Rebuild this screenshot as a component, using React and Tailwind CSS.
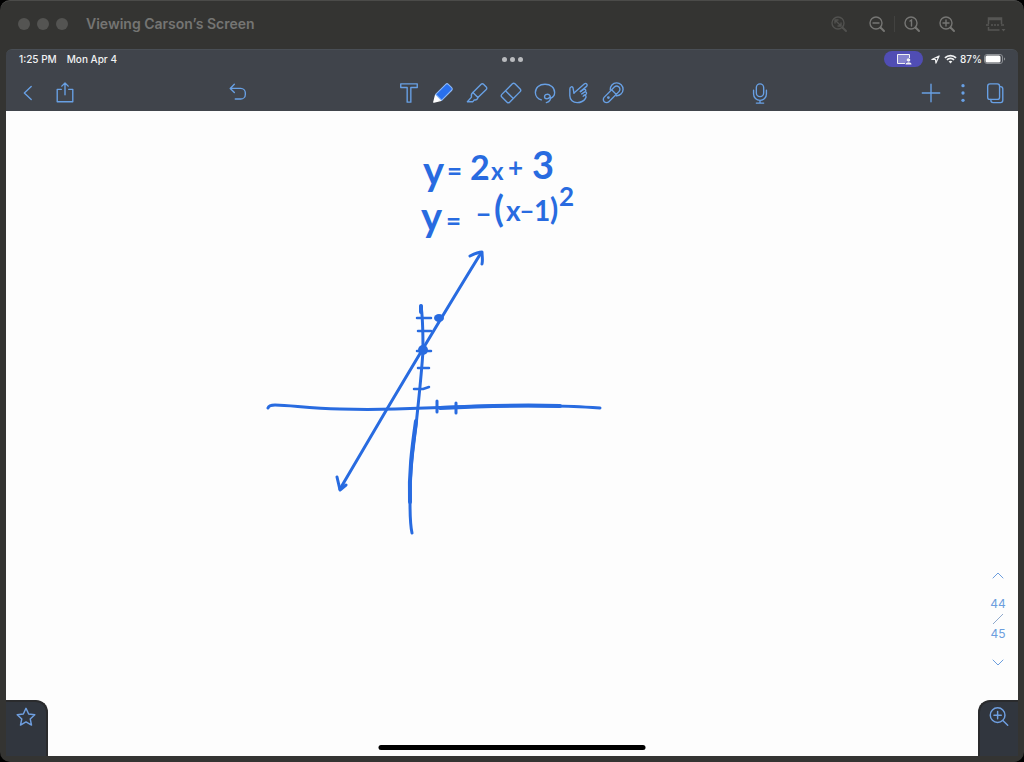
import React, { useState } from "react";

const tools = [
  { id: "text", label: "Text", icon: TextIcon },
  { id: "pen", label: "Pen", icon: PenIcon },
  { id: "highlighter", label: "Highlighter", icon: HighlighterIcon },
  { id: "eraser", label: "Eraser", icon: EraserIcon },
  { id: "lasso", label: "Lasso", icon: LassoIcon },
  { id: "hand", label: "Read only", icon: HandIcon },
  { id: "laser", label: "Laser pointer", icon: LaserIcon },
];

export default function App() {
  const [tool, setTool] = useState("pen");

  return (
    <div className="min-h-screen bg-black font-['Inter',sans-serif]">
      <div className="flex min-h-screen flex-col rounded-[10px] border-t border-[#4b4b49] bg-[#343432] px-1.5 pb-1.5">
        <TitleBar />

        <header className="rounded-t-md border-t border-[#494e55] bg-[#40444b]">
          <StatusBar />
          <div className="grid h-[43px] grid-cols-[1fr_auto_1fr] items-center pt-1.5 text-[#68a0e4]">
            <div className="flex items-center gap-[5px] pl-1.5">
              <ToolButton label="Back">
                <Icon><path d="M15.5 5L8 12l7.5 7" /></Icon>
              </ToolButton>
              <ToolButton label="Share">
                <Icon>
                  <path d="M8 8H3.5v13.500h17V8H16M12 14V1M8.500 4.500L12 1l3.500 3.500" />
                </Icon>
              </ToolButton>
              <div className="ml-34">
                <ToolButton label="Undo">
                  <Icon><path d="M8 2.500L3.500 7 8 11.500M3.500 7H15a5 5 0 0 1 5 5v1.500a5 5 0 0 1-5 5H9" /></Icon>
                </ToolButton>
              </div>
            </div>

            <div className="flex pr-0.5">
              {tools.map(t => (
                <button
                  key={t.id}
                  aria-label={t.label}
                  aria-pressed={tool === t.id}
                  onClick={() => setTool(t.id)}
                  className="flex h-8 w-[34px] items-center justify-center"
                >
                  <t.icon />
                </button>
              ))}
            </div>

            <div className="flex items-center pr-[7px] pl-28">
              <ToolButton label="Record">
                <Icon>
                  <rect x="8" y="2" width="8" height="14" rx="4" />
                  <path d="M5 9v4a7 7 0 0 0 14 0V9M12 20v3M8 23h8" />
                </Icon>
              </ToolButton>
              <div className="ml-auto flex">
                <ToolButton label="Add">
                  <Icon><path d="M12 2.500v19M2.500 12h19" /></Icon>
                </ToolButton>
                <ToolButton label="More">
                  <Icon>
                    <g fill="currentColor" stroke="none">
                      <circle cx="12" cy="4" r="1.800" />
                      <circle cx="12" cy="12" r="1.800" />
                      <circle cx="12" cy="20" r="1.800" />
                    </g>
                  </Icon>
                </ToolButton>
                <ToolButton label="Pages">
                  <Icon>
                    <rect x="4" y="2" width="13" height="17" rx="2.500" />
                    <path d="M17 5h1a2.500 2.500 0 0 1 2.500 2.500V20a2.500 2.500 0 0 1-2.500 2.500h-8A2.500 2.500 0 0 1 7.500 20v-1" />
                  </Icon>
                </ToolButton>
              </div>
            </div>
          </div>
        </header>

        <main className="relative flex-1 bg-[#fdfdfd]">
          <Note />
          <Pager page={44} total={45} />
          <button
            aria-label="Favorites"
            className="absolute bottom-0 left-0 flex h-14 w-[42px] justify-center rounded-tr-xl border-t-2 border-r-2 border-[#2a2b2d] bg-[#31363e] pt-1 text-[#6f9fe0]"
          >
            <svg viewBox="0 0 24 24" className="size-[22px]" fill="none" stroke="currentColor" strokeWidth="1.600" strokeLinejoin="round">
              <path d="M12 2.500l2.900 6.200 6.700.8-5 4.600 1.400 6.700-6-3.400-6 3.400 1.400-6.700-5-4.600 6.700-.8z" />
            </svg>
          </button>
          <button
            aria-label="Zoom"
            className="absolute right-0 bottom-0 flex h-14 w-10 justify-center rounded-tl-xl border-t-2 border-l-2 border-[#2a2b2d] bg-[#31363e] pt-1 text-[#6f9fe0]"
          >
            <svg viewBox="0 0 24 24" className="size-[22px]" fill="none" stroke="currentColor" strokeWidth="1.600" strokeLinecap="round">
              <circle cx="10.500" cy="10" r="8" />
              <path d="M16.500 16l5 5M10.500 6v8M6.500 10h8" />
            </svg>
          </button>
          <div className="absolute bottom-1.5 left-1/2 h-[5px] w-[267px] -translate-x-1/2 rounded-full bg-black" />
        </main>
      </div>
    </div>
  );
}

function TitleBar() {
  return (
    <div className="flex h-12 items-center px-3 pb-0.5 text-[#60605e]">
      <div className="flex gap-[7px]">
        <span className="size-3 rounded-full bg-[#545452]" />
        <span className="size-3 rounded-full bg-[#545452]" />
        <span className="size-3 rounded-full bg-[#545452]" />
      </div>
      <h1 className="ml-[18px] text-sm font-semibold text-[#757573]">Viewing Carson’s Screen</h1>
      <div className="ml-auto flex items-center">
        <MagnifierButton label="Zoom to fit" className="mr-5 text-[#51514f]">
          <path d="M5 8V5h3M5 5l6 6M11 8v3H8" />
        </MagnifierButton>
        <MagnifierButton label="Zoom out" className="text-[#767674]">
          <path d="M5 8h6" />
        </MagnifierButton>
        <span className="mx-2 h-4 w-px bg-[#424240]" />
        <MagnifierButton label="Actual size" className="mr-[17px] text-[#767674]">
          <path d="M7 6l1.500-1V11" />
        </MagnifierButton>
        <MagnifierButton label="Zoom in" className="mr-[30px] text-[#767674]">
          <path d="M5 8h6M8 5v6" />
        </MagnifierButton>
        <button aria-label="Window options" className="text-[#565654]">
          <svg viewBox="0 0 20 18" className="h-[18px] w-5" fill="none" stroke="currentColor" strokeWidth="1.500">
            <path d="M2.500 9V3h13v6M2.500 4.500h13M0 10h3M15 10h3M2.500 12v3h11" />
            <path d="M5 10h8" strokeDasharray="2 1" />
            <path d="M15.500 14h4l-2 2.500z" fill="currentColor" stroke="none" />
          </svg>
        </button>
      </div>
    </div>
  );
}

function MagnifierButton({ label, className, children }) {
  return (
    <button aria-label={label} className={className}>
      <svg viewBox="0 0 18 18" className="size-[18px]" fill="none" stroke="currentColor" strokeWidth="1.400" strokeLinecap="round">
        <circle cx="8" cy="8" r="6" />
        <path d="M12.500 12.500L16 16" strokeWidth="2" />
        {children}
      </svg>
    </button>
  );
}

function StatusBar() {
  return (
    <div className="grid h-[18px] grid-cols-3 items-center pr-3 pl-[13px] text-[11px] font-medium text-[#f1f2f3]">
      <div className="flex gap-2.5 text-[10px]">
        <span>1:25 PM</span>
        <span>Mon Apr 4</span>
      </div>
      <div className="flex justify-center gap-[3px]">
        <span className="size-[5px] rounded-full bg-[#b9bbbe]" />
        <span className="size-[5px] rounded-full bg-[#b9bbbe]" />
        <span className="size-[5px] rounded-full bg-[#b9bbbe]" />
      </div>
      <div className="flex items-center justify-end">
        <span className="mr-2 flex h-4 w-[39px] items-center justify-center rounded-full bg-[#504db4]">
          <svg viewBox="0 0 16 12" className="h-3 w-4" fill="none" stroke="currentColor">
            <path d="M9 10.500H1.500v-9h12V5" fill="#8684cf" />
            <circle cx="12.500" cy="7" r="1.800" fill="currentColor" stroke="none" />
            <path d="M9.500 11.500c0-3 6-3 6 0z" fill="currentColor" stroke="none" />
          </svg>
        </span>
        <svg viewBox="0 0 10 10" className="mr-1 size-[9px]" fill="none" stroke="currentColor" strokeWidth="1.300" strokeLinejoin="round">
          <path d="M1 5L9 1 5.500 9 5 5z" />
        </svg>
        <svg viewBox="0 0 14 10" className="mr-[3px] h-[10px] w-[13px]" fill="none" stroke="currentColor" strokeWidth="1.800">
          <path d="M1 3.800a8.500 8.500 0 0 1 12 0M3.200 6a5.300 5.300 0 0 1 7.600 0" />
          <path d="M5 7.800a3 3 0 0 1 4 0l-2 2z" fill="currentColor" stroke="none" />
        </svg>
        <span className="text-[10px]">87%</span>
        <svg viewBox="0 0 22 10" className="ml-0.5 h-[10px] w-[22px]" fill="none">
          <rect x=".5" y=".5" width="18" height="9" rx="2.500" stroke="#8d9095" />
          <rect x="1.500" y="1.500" width="15" height="7" rx="1.500" fill="#fff" />
          <path d="M20 3.500c1.500.5 1.500 2.500 0 3z" fill="#8d9095" />
        </svg>
      </div>
    </div>
  );
}

function ToolButton({ label, children }) {
  return (
    <button aria-label={label} className="flex size-8 items-center justify-center">
      {children}
    </button>
  );
}

function Icon({ children }) {
  return (
    <svg viewBox="0 0 24 24" className="size-[22px]" fill="none" stroke="currentColor" strokeWidth="1.500" strokeLinecap="round" strokeLinejoin="round">
      {children}
    </svg>
  );
}

function TextIcon() {
  return (
    <Icon><path d="M3 2h18v4h-7v16h-4V6H3z" /></Icon>
  );
}

function PenIcon() {
  return (
    <Icon>
      <path d="M2 22l2-8 6 6z" fill="#fff" stroke="#fff" />
      <path d="M4 13.500L15 2.500a2 2 0 0 1 2.800 0l3.700 3.700a2 2 0 0 1 0 2.800L10.500 20z" fill="#2970ee" stroke="#8db8f5" strokeWidth="1.200" />
    </Icon>
  );
}

function HighlighterIcon() {
  return (
    <Icon>
      <path d="M7.500 11.500L16.500 2.500a1.800 1.800 0 0 1 2.600 0l3 3a1.800 1.800 0 0 1 0 2.600L13 17z" />
      <path d="M7.500 11.500c-2 1.500-2 3-1.500 5L1.500 21.500h6l1.500-2c2 .3 3.500-.8 4-2.500" />
    </Icon>
  );
}

function EraserIcon() {
  return (
    <Icon>
      <path d="M2 13.500L13.500 2a2 2 0 0 1 2.800 0L22 7.700a2 2 0 0 1 0 2.800L10.500 22a2 2 0 0 1-2.800 0L2 16.300a2 2 0 0 1 0-2.800zM6 9.500l8.500 8.500" />
    </Icon>
  );
}

function LassoIcon() {
  return (
    <Icon>
      <path d="M8 19.500C4 18.500 1.500 15 1.500 11.500 1.500 6 6 2.500 12 2.500S22.500 6 22.500 11.500c0 3-1.500 5-4 6" />
      <path d="M13.500 22.500c4-1 5.500-4.500 4-7.500-1.500-2.500-6-2-6 1 0 3 4.500 3 5.500.5" />
    </Icon>
  );
}

function HandIcon() {
  return (
    <Icon>
      <path d="M6.500 12L5.500 6.500C5 4.500 2 5 2 7.500V15c0 4.500 3.500 7.500 8 7.500 4 0 7-1.500 9-4.500 1.500-2 .5-4-1.500-3.500" />
      <path d="M6.500 12L18 2c1.800-1.300 3.800.7 2.500 2.500L13.500 10.500" />
      <path d="M13.500 10.500l3.500-2.300c1.800-1 3.200 1 1.800 2.300L15 13M18 11c1.800-.8 3 1 1.700 2.300L16.500 15.500" />
    </Icon>
  );
}

function LaserIcon() {
  return (
    <Icon>
      <path d="M9 8.500a7 7 0 1 1 6.500 6.500" />
      <path d="M18.500 10.500L7.500 21.500a3.500 3.500 0 0 1-5-5L13.500 5.500a3.500 3.500 0 0 1 5 5zM10.500 8.500l5 5" />
      <circle cx="7" cy="17" r=".8" />
    </Icon>
  );
}

// Handwritten page content: the two equations and the sketched graph
function Note() {
  return (
    <svg
      viewBox="6 111 1012 645"
      className="block w-full"
      fill="none"
      stroke="#286be0"
      strokeWidth="3"
      strokeLinecap="round"
      strokeLinejoin="round"
    >
      <g fill="#286be0" stroke="none" className="font-['Lato',sans-serif] text-[32px] font-bold">
        <text y="180">
          <tspan x="423" y="185" fontSize="40">y</tspan>
          <tspan x="447" y="180" fontSize="26">=</tspan>
          <tspan x="470" fontSize="34">2</tspan>
          <tspan x="491" fontSize="24">x</tspan>
          <tspan x="508" y="177" fontSize="26">+</tspan>
          <tspan x="532" y="179" fontSize="38">3</tspan>
        </text>
        <text y="222">
          <tspan x="421" y="231" fontSize="40">y</tspan>
          <tspan x="446" y="230" fontSize="26">=</tspan>
          <tspan x="476" y="224" fontSize="26">−</tspan>
          <tspan x="494" y="222" fontSize="36">(</tspan>
          <tspan x="506" y="221" fontSize="28">x</tspan>
          <tspan x="520" y="220" fontSize="24">−</tspan>
          <tspan x="534" y="221" fontSize="28">1</tspan>
          <tspan x="550" y="220" fontSize="30">)</tspan>
          <tspan x="559" y="206" fontSize="26">2</tspan>
        </text>
      </g>

      {/* axes */}
      <path d="M268 408c1-3 4-3 7-3 17 0 34 4 65 4 35 1 63 0 85-1 50-2 92-3 130-2 15 0 30 1 45 2" />
      <path d="M440 408c40-2 80-3 120-2" strokeWidth="4" />
      <path d="M421 306c2 12 2 26 2 45-2 30-5 54-7 75-3 24-7 48-6 76 0 11 0 22 2 31" />
      <path d="M421 306v6M416 421c-4 28-7 52-6 81" strokeWidth="4" />

      {/* tick marks */}
      <g strokeWidth="2.500">
        <path d="M417 318h14M418 331h13M417 351h14M418 368h11M414 389h9l6-2" />
        <path d="M437 401v11M456 403v10" strokeWidth="3" />
      </g>

      {/* y = 2x + 3 */}
      <path d="M340 489L387 409Q450 303 481 253" />
      <path d="M470 256c4-2 8-4 12-4 0 4 1 8 0 12M337 477l3 13 6-5" />
      <ellipse cx="439" cy="318" rx="5" ry="4" fill="#286be0" stroke="none" />
      <circle cx="423" cy="350" r="5" fill="#286be0" stroke="none" />
    </svg>
  );
}

function Pager({ page, total }) {
  return (
    <nav aria-label="Pages" className="absolute right-2 bottom-[87px] flex w-6 flex-col items-center text-xs leading-[14px] text-[#6c9ede]">
      <button aria-label="Previous page" className="mb-4 flex h-3 items-center">
        <svg viewBox="0 0 12 8" className="h-2 w-3" fill="none" stroke="currentColor" strokeLinecap="round">
          <path d="M1 7l5-5 5 5" />
        </svg>
      </button>
      <span>{page}</span>
      <svg viewBox="0 0 12 12" className="my-0.5 size-3" fill="none" stroke="#8fa9cc">
        <path d="M1 11L11 1" />
      </svg>
      <span>{total}</span>
      <button aria-label="Next page" className="mt-4 flex h-3 items-center">
        <svg viewBox="0 0 12 8" className="h-2 w-3" fill="none" stroke="currentColor" strokeLinecap="round">
          <path d="M1 1l5 5 5-5" />
        </svg>
      </button>
    </nav>
  );
}
